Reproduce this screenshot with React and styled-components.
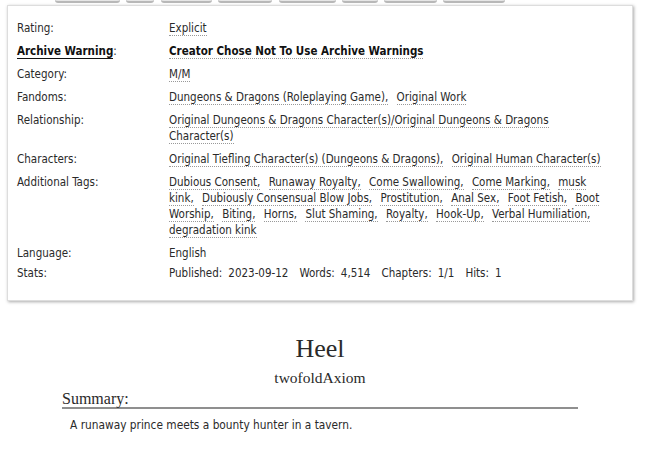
import React from "react";
import styled, { createGlobalStyle } from "styled-components";

const GlobalStyle = createGlobalStyle`
  body {
    margin: 0;
    background: #fff;
    color: #2a2a2a;
    font-family: "DejaVu Sans Condensed", "DejaVu Sans", sans-serif;
    font-stretch: condensed;
  }
`;

const navButtons = [
  { left: 55, width: 65 },
  { left: 6, width: 28 },
  { left: 7, width: 51 },
  { left: 6, width: 54 },
  { left: 7, width: 57 },
  { left: 6, width: 36 },
  { left: 6, width: 53 },
  { left: 6, width: 62 },
];

const meta = [
  { label: "Rating", tags: ["Explicit"] },
  { label: "Archive Warning", tags: ["Creator Chose Not To Use Archive Warnings"], strong: true },
  { label: "Category", tags: ["M/M"] },
  { label: "Fandoms", tags: ["Dungeons & Dragons (Roleplaying Game)", "Original Work"] },
  {
    label: "Relationship",
    tags: ["Original Dungeons & Dragons Character(s)/Original Dungeons & Dragons Character(s)"],
  },
  {
    label: "Characters",
    tags: ["Original Tiefling Character(s) (Dungeons & Dragons)", "Original Human Character(s)"],
  },
  {
    label: "Additional Tags",
    tags: [
      "Dubious Consent", "Runaway Royalty", "Come Swallowing", "Come Marking", "musk kink",
      "Dubiously Consensual Blow Jobs", "Prostitution", "Anal Sex", "Foot Fetish", "Boot Worship",
      "Biting", "Horns", "Slut Shaming", "Royalty", "Hook-Up", "Verbal Humiliation",
      "degradation kink",
    ],
  },
  { label: "Language", plain: "English" },
];

const stats = [
  ["Published", "2023-09-12"],
  ["Words", "4,514"],
  ["Chapters", "1/1"],
  ["Hits", "1"],
];

const NavBar = styled.ul`
  display: flex;
  height: 3px;
  margin: 0;
  padding: 0;
  list-style: none;
  overflow: hidden;
`;

const NavButton = styled.li`
  flex: none;
  height: 3px;
  box-sizing: border-box;
  margin-left: ${(p) => p.$left}px;
  width: ${(p) => p.$width}px;
  background: #e6e6e6;
  border-bottom: 2px solid #b8b8b8;
  border-radius: 0 0 3px 3px;
`;

const MetaBox = styled.dl`
  display: grid;
  grid-template-columns: 152px 1fr;
  row-gap: 7px;
  margin: 2px 19px 0 7px;
  padding: 14px 22px 19px 9px;
  border: 1px solid #ddd;
  box-shadow: 1px 1px 3px #aaa;
  font-size: 11.5px;
  line-height: 16px;
`;

const Label = styled.dt`
  margin: ${(p) => (p.$tight ? "-3px 0 0" : "0")};
  color: #2a2a2a;
`;

const LabelText = styled.span`
  font-weight: ${(p) => (p.$strong ? 700 : 400)};
  color: ${(p) => (p.$strong ? "#111" : "inherit")};
  border-bottom: ${(p) => (p.$strong ? "1px solid #111" : "none")};
`;

const Value = styled.dd`
  margin: ${(p) => (p.$tight ? "-3px 0 0" : "0")};
  color: #2a2a2a;
`;

const Tag = styled.span`
  border-bottom: 1px dotted #999;
  font-weight: ${(p) => (p.$strong ? 700 : 400)};
  color: ${(p) => (p.$strong ? "#111" : "inherit")};
`;

const Sep = styled.span`
  margin-right: 5px;
`;

const StatKey = styled.span`
  margin-right: 6px;
`;

const StatItem = styled.span`
  margin-right: 11px;
`;

const Preface = styled.div`
  margin: 32px 74px 0 62px;
  color: #2a2a2a;
`;

const Title = styled.h2`
  margin: 0;
  text-align: center;
  font-family: "Liberation Serif", serif;
  font-stretch: normal;
  font-weight: 400;
  font-size: 26px;
  line-height: 32px;
`;

const Byline = styled.h3`
  margin: 3px 0 0;
  text-align: center;
  font-family: "Liberation Serif", serif;
  font-stretch: normal;
  font-weight: 400;
  font-size: 15.5px;
  line-height: 20px;
`;

const SummaryHeading = styled.h3`
  margin: 2px 0 0;
  font-family: "Liberation Serif", serif;
  font-stretch: normal;
  font-weight: 400;
  font-size: 16px;
  line-height: 17px;
  border-bottom: 2px solid #8f8f8f;
`;

const SummaryText = styled.p`
  margin: 8px 0 0 8px;
  font-size: 11.8px;
  line-height: 16px;
`;

export default function App() {
  return (
    <>
      <GlobalStyle />
      <NavBar>
        {navButtons.map((b, i) => (
          <NavButton key={i} $left={b.left} $width={b.width} />
        ))}
      </NavBar>
      <MetaBox>
        {meta.map((row) => (
          <React.Fragment key={row.label}>
            <Label>
              <LabelText $strong={row.strong}>{row.label}</LabelText>:
            </Label>
            <Value>
              {row.plain
                ? row.plain
                : row.tags.map((t, i) => (
                    <React.Fragment key={t}>
                      <Tag $strong={row.strong}>
                        {t}
                        {i < row.tags.length - 1 ? "," : ""}
                      </Tag>
                      {i < row.tags.length - 1 && <Sep> </Sep>}
                    </React.Fragment>
                  ))}
            </Value>
          </React.Fragment>
        ))}
        <Label $tight>
          <LabelText>Stats</LabelText>:
        </Label>
        <Value $tight>
          {stats.map(([k, v]) => (
            <StatItem key={k}>
              <StatKey>{k}:</StatKey>
              {v}
            </StatItem>
          ))}
        </Value>
      </MetaBox>
      <Preface>
        <Title>Heel</Title>
        <Byline>twofoldAxiom</Byline>
        <SummaryHeading>Summary:</SummaryHeading>
        <SummaryText>A runaway prince meets a bounty hunter in a tavern.</SummaryText>
      </Preface>
    </>
  );
}
